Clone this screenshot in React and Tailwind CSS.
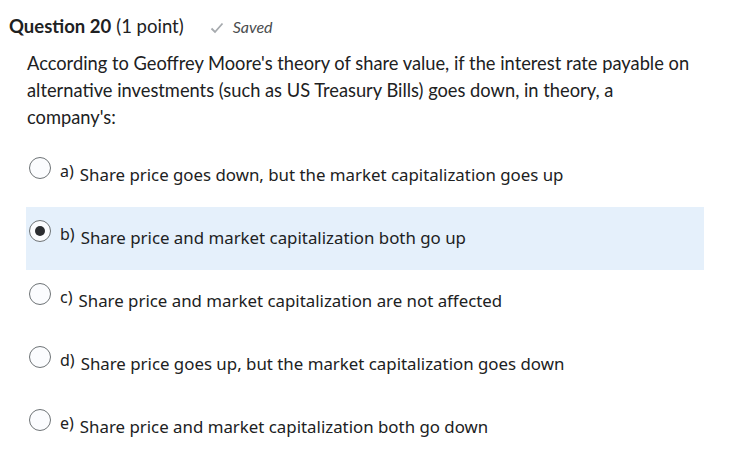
import React from "react";

const options = [
  { l: "a)", t: "Share price goes down, but the market capitalization goes up" },
  { l: "b)", t: "Share price and market capitalization both go up", sel: true },
  { l: "c)", t: "Share price and market capitalization are not affected" },
  { l: "d)", t: "Share price goes up, but the market capitalization goes down" },
  { l: "e)", t: "Share price and market capitalization both go down" },
];

function Radio({ sel }) {
  return (
    <div className="w-[22px] h-[22px] rounded-full border border-[#6e7376] bg-[#fbfcfe] flex items-center justify-center shrink-0">
      {sel && <div className="w-[10px] h-[10px] rounded-full bg-[#2b2d30]" />}
    </div>
  );
}

export default function App() {
  return (
    <div className="w-[750px] h-[463px] bg-white text-[#202122] font-['Lato','Noto_Sans',sans-serif] overflow-hidden">
      <div className="pl-[9px] pt-[14px] flex items-center h-[40px]">
        <span className="text-[18.5px] font-bold">Question 20</span>
        <span className="text-[18.5px] ml-[5px]">(1 point)</span>
        <svg className="ml-[26px] mt-[1px]" width="14" height="12" viewBox="0 0 14 12">
          <path d="M1.5 6.5 L5 10 L12.5 1.5" fill="none" stroke="#a6aaae" strokeWidth="1.8" />
        </svg>
        <span className="ml-[9px] text-[16px] italic text-[#494c4e]">Saved</span>
      </div>
      <div className="pl-[27px] pt-[10px] w-[695px] text-[18.3px] leading-[27px]">
        According to Geoffrey Moore's theory of share value, if the interest rate payable on alternative investments (such as US Treasury Bills) goes down, in theory, a company's:
      </div>
      <div className="mt-[13px] flex flex-col w-[678px] ml-[26px]">
        {options.map((o) => (
          <div key={o.l} className={`h-[63px] flex items-center pl-[3px] ${o.sel ? "bg-[#e5f0fb]" : ""}`}>
            <div className="flex items-center -mt-[16px]">
              <Radio sel={o.sel} />
            </div>
            <span className="ml-[9px] text-[16px] -mt-[9px] font-['Noto_Sans','Lato',sans-serif]">{o.l}</span>
            <span className="ml-[6px] text-[16.85px] -mt-[1px] font-['Noto_Sans','Lato',sans-serif]">{o.t}</span>
          </div>
        ))}
      </div>
    </div>
  );
}
